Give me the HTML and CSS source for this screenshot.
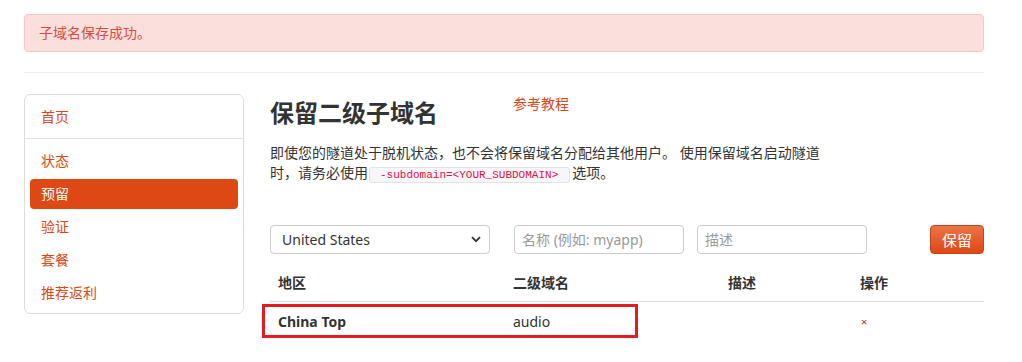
FILE: index.html
```html
<!DOCTYPE html>
<html lang="zh-CN">
<head>
    <meta charset="UTF-8">
    <title>保留二级子域名</title>
    <link rel="stylesheet" href="styles.css">
</head>
<body>
    <div class="container">
        <div class="alert">子域名保存成功。</div>
        <hr class="rule">

        <div class="layout">
            <ul class="side-nav">
                <li><a href="#">首页</a></li>
                <li class="divider"></li>
                <li><a href="#">状态</a></li>
                <li class="active"><a href="#">预留</a></li>
                <li><a href="#">验证</a></li>
                <li><a href="#">套餐</a></li>
                <li><a href="#">推荐返利</a></li>
            </ul>

            <div class="main">
                <div class="title-row">
                    <h1>保留二级子域名</h1>
                    <a class="guide" href="#">参考教程</a>
                </div>
                <p class="intro">即使您的隧道处于脱机状态，也不会将保留域名分配给其他用户。 使用保留域名启动隧道时，请务必使用<code>-subdomain=&lt;YOUR_SUBDOMAIN&gt;</code>选项。</p>

                <form class="reserve-form">
                    <div class="select-wrap">
                        <select class="region">
                            <option>United States</option>
                            <option>China Top</option>
                        </select>
                        <svg class="chevron" width="10" height="7" viewBox="0 0 10 7"><path d="M1 1.2 L5 5.2 L9 1.2" fill="none" stroke="#333" stroke-width="1.8"/></svg>
                    </div>
                    <input class="field name" type="text" placeholder="名称 (例如: myapp)">
                    <input class="field desc" type="text" placeholder="描述">
                    <button class="btn-reserve" type="button">保留</button>
                </form>

                <div class="table-wrap">
                    <table class="domains">
                        <thead>
                            <tr>
                                <th class="c-region">地区</th>
                                <th class="c-sub">二级域名</th>
                                <th class="c-desc">描述</th>
                                <th class="c-op">操作</th>
                            </tr>
                        </thead>
                        <tbody>
                            <tr>
                                <td><strong>China Top</strong></td>
                                <td>audio</td>
                                <td></td>
                                <td><a class="remove" href="#">×</a></td>
                            </tr>
                        </tbody>
                    </table>
                    <div class="highlight"></div>
                </div>
            </div>
        </div>
    </div>
</body>
</html>
```

FILE: styles.css
```css
body {
    margin: 0;
    font-family: "Noto Sans", "Noto Sans CJK SC", sans-serif;
    font-size: 14px;
    line-height: 20px;
    color: #333;
    background: #fff;
}

a {
    color: #dd4814;
    text-decoration: none;
}

.container {
    width: 960px;
    margin: 0 0 0 24px;
    padding-top: 14px;
}

.alert {
    background-color: #fbdfdc;
    border: 1px solid #f6c5c8;
    border-radius: 4px;
    color: #de4a3c;
    padding: 8px 14px;
}

.rule {
    border: 0;
    border-top: 1px solid #eee;
    margin: 20px 0 21px;
}

.layout {
    display: flex;
    gap: 26px;
}

/* sidebar */
.side-nav {
    list-style: none;
    margin: 0;
    padding: 7px 5px 5px;
    width: 208px;
    flex: none;
    border: 1px solid #ddd;
    border-radius: 6px;
    align-self: flex-start;
}

.side-nav li a {
    display: block;
    padding: 5px 11px;
    border-radius: 4px;
    margin-bottom: 3px;
}

.side-nav li:last-child a {
    margin-bottom: 0;
}

.side-nav li.divider {
    height: 1px;
    background: #e2e2e2;
    margin: 6px -5px 7px;
}

.side-nav li.active a {
    background-color: #dd4814;
    color: #fff;
}

/* main */
.main {
    flex: 1;
}

.title-row {
    display: flex;
    align-items: flex-start;
}

.title-row h1 {
    margin: 1px 0 0;
    font-size: 24px;
    line-height: 36px;
    font-weight: bold;
    color: #333;
}

.guide {
    margin-left: 75px;
    margin-top: 0;
}

.intro {
    width: 560px;
    margin: 12px 0 40px;
    line-height: 20px;
}

.intro code {
    font-family: "Liberation Mono", monospace;
    font-size: 11px;
    color: #dd1144;
    background-color: #f7f7f9;
    border: 1px solid #e1e1e8;
    border-radius: 3px;
    padding: 1px 11px 1px 10px;
    margin: 0 2px 0 1px;
}

.reserve-form {
    display: flex;
    align-items: center;
    margin: 0 0 11px;
    width: 714px;
}

.select-wrap {
    position: relative;
    width: 220px;
}

.region {
    appearance: none;
    width: 100%;
    height: 29px;
    border: 1px solid #ccc;
    border-radius: 4px;
    background: #fff;
    padding: 0 11px;
    font-family: inherit;
    font-size: 14px;
    color: #333;
}

.chevron {
    position: absolute;
    right: 9px;
    top: 11px;
}

.field {
    box-sizing: border-box;
    width: 170px;
    height: 29px;
    border: 1px solid #ccc;
    border-radius: 4px;
    padding: 0 7px;
    font-family: inherit;
    font-size: 14px;
    color: #333;
}

.field::placeholder {
    color: #999;
}

.field.name {
    margin-left: 24px;
}

.field.desc {
    margin-left: 13px;
}

.btn-reserve {
    margin-left: auto;
    width: 54px;
    height: 29px;
    border: 1px solid #c8431a;
    border-radius: 4px;
    background: linear-gradient(#ec7447, #dd4814);
    color: #fff;
    font-family: inherit;
    font-size: 15px;
    padding: 0;
}

/* table */
.table-wrap {
    position: relative;
    width: 714px;
}

.domains {
    width: 100%;
    border-collapse: collapse;
}

.domains th,
.domains td {
    text-align: left;
    padding: 8px 8px;
    line-height: 20px;
}

.domains th {
    font-weight: bold;
    border-bottom: 1px solid #ddd;
}

.domains td {
    padding: 9px 8px;
}

.c-region { width: 219px; }
.c-sub { width: 199px; }
.c-desc { width: 116px; }

.remove {
    color: #dd2222;
    font-size: 11px;
    margin-left: 1px;
}

.highlight {
    position: absolute;
    left: -8px;
    top: 39px;
    width: 370px;
    height: 28px;
    border: 3px solid #e31b23;
}
```
